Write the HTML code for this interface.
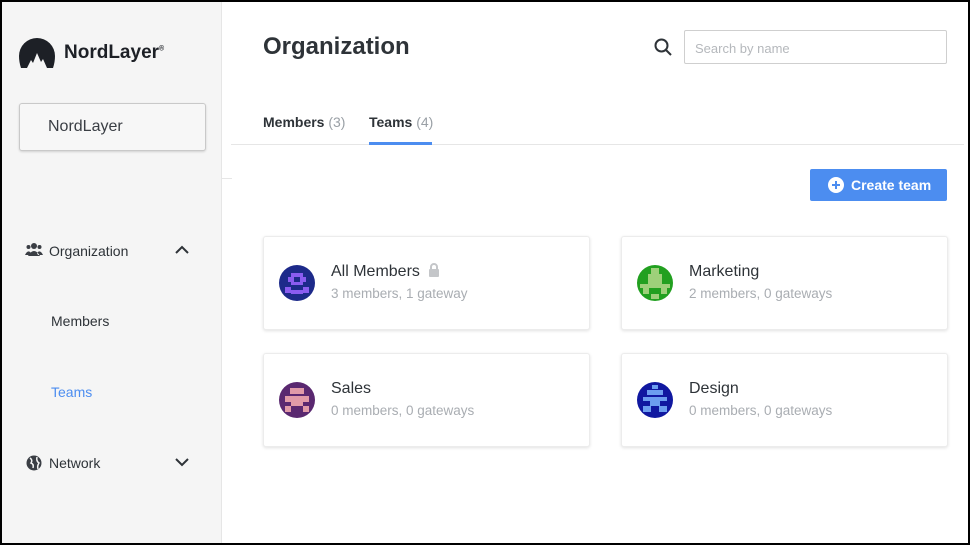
<!DOCTYPE html>
<html><head><style>
*{box-sizing:border-box;margin:0;padding:0}
body{width:970px;height:545px;background:#000;font-family:"Liberation Sans",sans-serif;overflow:hidden;position:relative}
.frame{position:absolute;left:2px;top:2px;width:966px;height:541px;background:#fff;overflow:hidden}
.side{position:absolute;left:0;top:0;width:220px;height:541px;background:#f5f5f5;border-right:1px solid #e6e6e6}
.abs{position:absolute}
.card{position:absolute;width:327px;height:94px;background:#fff;border:1px solid #ececec;border-radius:3px;box-shadow:0 1px 3px rgba(0,0,0,.12)}
.card .t{position:absolute;left:67px;top:26px;font-size:16px;color:#2e3338}
.card .s{position:absolute;left:67px;top:49px;font-size:13.5px;color:#a9adb2}
.card svg{position:absolute;left:15px;top:28px}
</style></head><body><div class="frame">
<div class="side">
 <svg class="abs" style="left:16px;top:35px" width="38" height="32" viewBox="0 0 38 32"><path d="M3 31 Q1 25 1 19 A18 18 0 0 1 37 19 Q37 25 35 31 Z" fill="#1d2026"/><path d="M9 31 L13 23 L15 26 L19 16 L23 25 L25 22 L29 31 Z" fill="#f5f5f5"/></svg>
 <div class="abs" style="left:62px;top:40px;font-size:19px;font-weight:bold;color:#1d2026">NordLayer<sup style="font-size:7px">®</sup></div>
 <div class="abs" style="left:17px;top:101px;width:187px;height:48px;border:1px solid #c9c9c9;border-radius:3px;box-shadow:0 1px 2px rgba(0,0,0,.15);font-size:16px;color:#3a3e44;padding:14px 0 0 28px;background:#f7f7f7">NordLayer</div>
 <svg class="abs" style="left:23px;top:240px" width="18" height="14" viewBox="0 0 18 14"><circle cx="9" cy="4" r="3" fill="#3a3e44"/><circle cx="3.5" cy="5" r="2" fill="#3a3e44"/><circle cx="14.5" cy="5" r="2" fill="#3a3e44"/><path d="M3 14 Q9 4 15 14Z M0 13 Q3 7 6 11 L5 13Z M18 13 Q15 7 12 11 L13 13Z" fill="#3a3e44"/></svg>
 <div class="abs" style="left:47px;top:241px;font-size:14px;color:#2e3338">Organization</div>
 <svg class="abs" style="left:173px;top:243px" width="14" height="9"><path d="M1 8 L7 2 L13 8" stroke="#2e3338" stroke-width="2" fill="none"/></svg>
 <div class="abs" style="left:49px;top:311px;font-size:14px;color:#2e3338">Members</div>
 <div class="abs" style="left:49px;top:382px;font-size:14px;color:#4c8df0">Teams</div>
 <svg class="abs" style="left:24px;top:453px" width="16" height="16" viewBox="0 0 16 16"><circle cx="8" cy="8" r="7.5" fill="#3a3e44"/><path d="M4 3 Q7 5 5 8 Q8 9 7 13 M11 2 Q10 6 13 8 Q11 11 12 14" stroke="#f5f5f5" stroke-width="1.5" fill="none"/></svg>
 <div class="abs" style="left:47px;top:453px;font-size:14px;color:#2e3338">Network</div>
 <svg class="abs" style="left:173px;top:456px" width="14" height="9"><path d="M1 1 L7 7 L13 1" stroke="#2e3338" stroke-width="2" fill="none"/></svg>
</div>
<div class="abs" style="left:220px;top:176px;width:10px;border-top:1px solid #e6e6e6"></div>
<div class="abs" style="left:261px;top:31px;font-size:24px;font-weight:bold;color:#2e3338">Organization</div>
<svg class="abs" style="left:652px;top:36px" width="18" height="18"><circle cx="7.5" cy="7.5" r="6" stroke="#2e3338" stroke-width="2" fill="none"/><path d="M12 12 L17 17" stroke="#2e3338" stroke-width="2"/></svg>
<div class="abs" style="left:682px;top:28px;width:263px;height:34px;border:1px solid #cfcfcf;border-radius:2px;font-size:13px;color:#b5b8bc;padding:10px 0 0 10px">Search by name</div>
<div class="abs" style="left:261px;top:112px;font-size:14px;font-weight:bold;color:#2e3338">Members <span style="font-weight:normal;color:#9aa0a6">(3)</span></div>
<div class="abs" style="left:367px;top:112px;font-size:14px;font-weight:bold;color:#2e3338">Teams <span style="font-weight:normal;color:#9aa0a6">(4)</span></div>
<div class="abs" style="left:229px;top:142px;width:733px;border-top:1px solid #e6e6e6"></div>
<div class="abs" style="left:367px;top:140px;width:63px;height:3px;background:#4c8df0"></div>
<div class="abs" style="left:808px;top:167px;width:137px;height:32px;background:#4c8df0;border-radius:2px;color:#fff;font-size:14px;font-weight:bold;padding:8px 0 0 41px">Create team</div>
<svg class="abs" style="left:826px;top:175px" width="16" height="16"><circle cx="8" cy="8" r="8" fill="#fff"/><path d="M8 4V12M4 8H12" stroke="#4c8df0" stroke-width="2"/></svg>

<div class="card" style="left:261px;top:234px">
<svg width="36" height="36" viewBox="0 0 36 36"><circle cx="18" cy="18" r="18" fill="#1d2a8a"/><rect x="12" y="8" width="12" height="4" fill="#8a5cf0"/><rect x="9" y="12" width="6" height="5" fill="#8a5cf0"/><rect x="21" y="12" width="6" height="5" fill="#8a5cf0"/><rect x="12" y="17" width="12" height="3" fill="#8a5cf0"/><rect x="6" y="22" width="6" height="6" fill="#8a5cf0"/><rect x="24" y="22" width="6" height="6" fill="#8a5cf0"/><rect x="12" y="25" width="12" height="4" fill="#8a5cf0"/></svg>
<div class="t">All Members <svg width="12" height="14" style="position:static;vertical-align:-1px;margin-left:4px"><rect x="1" y="6" width="10" height="8" rx="1" fill="#c4c6c9"/><path d="M3 6V4a3 3 0 0 1 6 0v2" stroke="#c4c6c9" stroke-width="2" fill="none"/></svg></div>
<div class="s">3 members, 1 gateway</div></div>

<div class="card" style="left:619px;top:234px">
<svg width="36" height="36" viewBox="0 0 36 36"><circle cx="18" cy="18" r="18" fill="#22a020"/><rect x="14" y="3" width="8" height="6" fill="#9ed07a"/><rect x="11" y="9" width="14" height="10" fill="#9ed07a"/><rect x="3" y="19" width="30" height="4" fill="#9ed07a"/><rect x="6" y="23" width="6" height="6" fill="#9ed07a"/><rect x="24" y="23" width="6" height="6" fill="#9ed07a"/><rect x="14" y="29" width="8" height="5" fill="#9ed07a"/></svg>
<div class="t">Marketing</div><div class="s">2 members, 0 gateways</div></div>

<div class="card" style="left:261px;top:351px">
<svg width="36" height="36" viewBox="0 0 36 36"><circle cx="18" cy="18" r="18" fill="#5a2870"/><rect x="11" y="6" width="14" height="6" fill="#e09aa8"/><rect x="6" y="14" width="24" height="6" fill="#e09aa8"/><rect x="12" y="20" width="12" height="4" fill="#e09aa8"/><rect x="6" y="24" width="6" height="6" fill="#e09aa8"/><rect x="24" y="24" width="6" height="6" fill="#e09aa8"/></svg>
<div class="t">Sales</div><div class="s">0 members, 0 gateways</div></div>

<div class="card" style="left:619px;top:351px">
<svg width="36" height="36" viewBox="0 0 36 36"><circle cx="18" cy="18" r="18" fill="#1018a0"/><rect x="15" y="3" width="6" height="4" fill="#6c9ef0"/><rect x="10" y="8" width="16" height="5" fill="#6c9ef0"/><rect x="6" y="15" width="24" height="4" fill="#6c9ef0"/><rect x="13" y="19" width="10" height="5" fill="#6c9ef0"/><rect x="6" y="24" width="8" height="6" fill="#6c9ef0"/><rect x="22" y="24" width="8" height="6" fill="#6c9ef0"/></svg>
<div class="t">Design</div><div class="s">0 members, 0 gateways</div></div>
</div></body></html>
